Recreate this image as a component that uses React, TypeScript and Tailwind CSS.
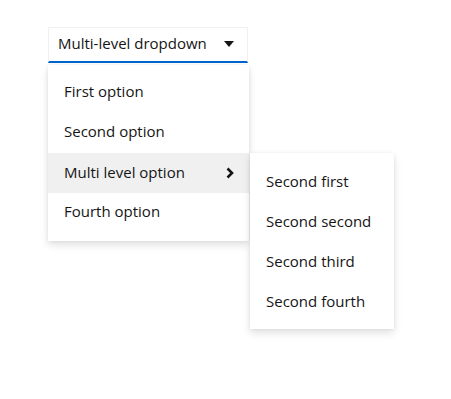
import React from "react";

function Item({ children, sub }: { children: React.ReactNode; sub?: boolean }) {
  return (
    <div className={`h-10 flex items-center px-4 text-[15px] whitespace-nowrap text-[#151515] ${sub ? "pt-[1px]" : "pb-[3px]"}`}>
      {children}
    </div>
  );
}

export default function App() {
  return (
    <div className="w-[451px] h-[399px] bg-white pl-12 pt-[27px] font-['Open_Sans','Liberation_Sans',sans-serif]">
      <div className="relative w-[201px]">
        <button className="w-[200px] h-9 flex items-center justify-between pl-[9px] pr-[13px] pb-[2px] border border-[#f0f0f0] border-b-2 border-b-[#0066cc] text-[15px] whitespace-nowrap text-[#151515] bg-white">
          <span>Multi-level dropdown</span>
          <svg width="10" height="6" viewBox="0 0 10 6">
            <path d="M0 0 L10 0 L5 6 Z" fill="#151515" />
          </svg>
        </button>
        <div className="absolute left-0 top-[38px] w-[201px] bg-white py-2 shadow-[0_4px_8px_0_rgba(3,3,3,0.12),0_0_4px_0_rgba(3,3,3,0.06)]">
          <Item>First option</Item>
          <Item>Second option</Item>
          <div className="relative">
            <div className="h-10 flex items-center justify-between pl-4 pr-[15px] text-[15px] whitespace-nowrap text-[#151515] bg-[#f0f0f0]">
              <span className="pb-[2px]">Multi level option</span>
              <svg width="8" height="12" viewBox="0 0 8 12">
                <path d="M1.5 1.5 L6 6 L1.5 10.5" stroke="#151515" strokeWidth="2.6" fill="none" strokeLinejoin="miter" />
              </svg>
            </div>
            <div className="absolute left-[202px] top-0 w-[144px] bg-white py-2 shadow-[0_4px_8px_0_rgba(3,3,3,0.12),0_0_4px_0_rgba(3,3,3,0.06)]">
              <Item sub>Second first</Item>
              <Item sub>Second second</Item>
              <Item sub>Second third</Item>
              <Item sub>Second fourth</Item>
            </div>
          </div>
          <Item>Fourth option</Item>
        </div>
      </div>
    </div>
  );
}
